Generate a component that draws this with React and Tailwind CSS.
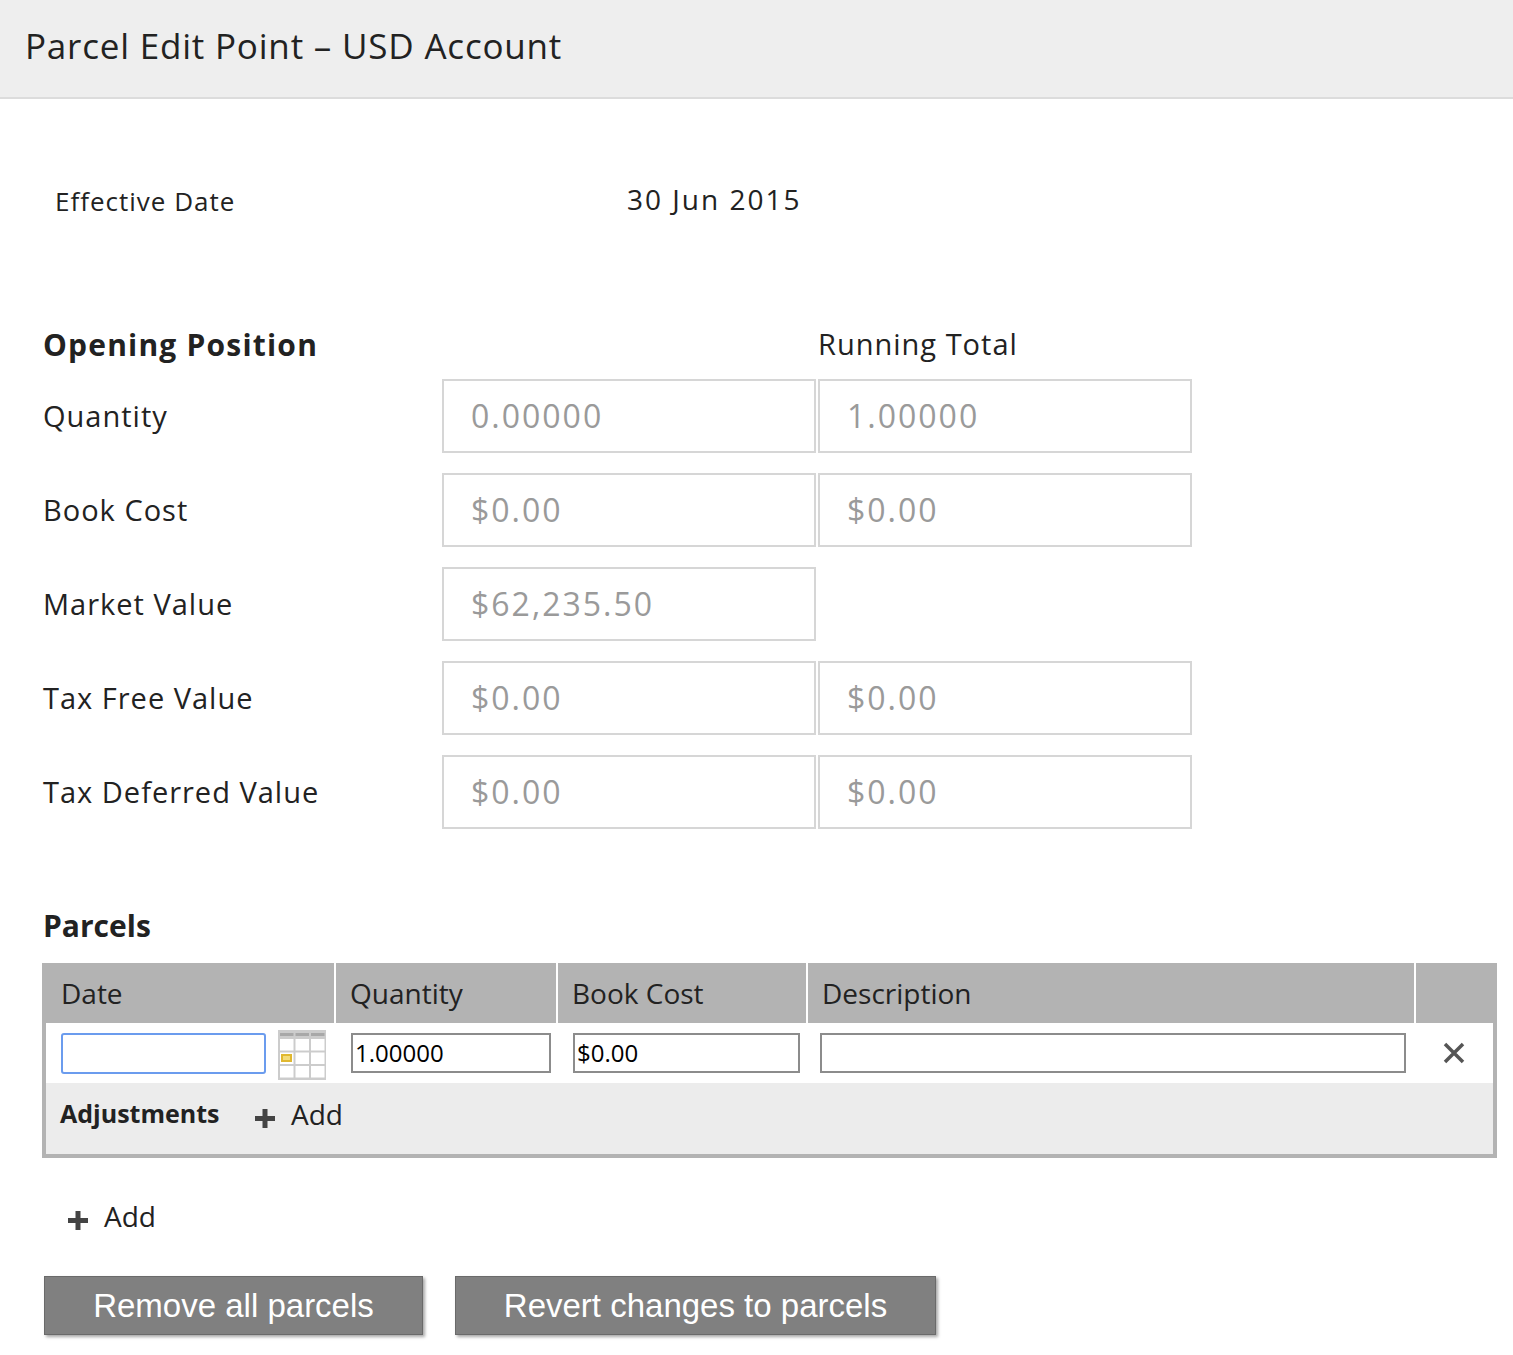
export default function App() {
  const F = { fontFamily: '"Open Sans", "Noto Sans", sans-serif' };
  const rows = [
    ["Quantity", "0.00000", "1.00000"],
    ["Book Cost", "$0.00", "$0.00"],
    ["Market Value", "$62,235.50", null],
    ["Tax Free Value", "$0.00", "$0.00"],
    ["Tax Deferred Value", "$0.00", "$0.00"],
  ];
  const Box = ({ v }) => (
    <div className="w-[374px] h-[74px] border-2 border-[#d6d6d6] flex items-center pl-[27px] text-[32px] text-[#9a9a9a] tracking-[2px]">{v}</div>
  );
  const Plus = () => (
    <svg width="22" height="22" viewBox="0 0 22 22" className="mt-2"><rect x="8.5" y="2" width="5" height="19" fill="#444"/><rect x="1" y="9" width="20" height="5" fill="#444"/></svg>
  );
  return (
    <div className="w-[1513px] h-[1355px] bg-white text-[#222]" style={F}>
      <div className="h-[99px] bg-[#eeeeee] border-b-2 border-[#dcdcdc] flex items-center pl-[25px] text-[35px] tracking-[0.8px] text-[#222] pb-1">Parcel Edit Point – USD Account</div>
      <div className="flex items-center mt-[82px] h-[40px]">
        <div className="pl-[55px] w-[627px] text-[26px] tracking-[1px]">Effective Date</div>
        <div className="text-[28px] tracking-[2px] -mt-1">30 Jun 2015</div>
      </div>
      <div className="flex items-end mt-[98px] h-[48px] pl-[43px]">
        <div className="w-[775px] text-[30px] font-bold tracking-[1.2px]">Opening Position</div>
        <div className="text-[29px] tracking-[1px] pb-[2px]">Running Total</div>
      </div>
      <div className="pl-[43px] flex flex-col gap-[20px] mt-[12px]">
        {rows.map(([l, a, b]) => (
          <div key={l} className="flex items-center h-[74px]">
            <div className="w-[399px] text-[29px] tracking-[1px]">{l}</div>
            <Box v={a} />
            {b && <div className="ml-[2px]"><Box v={b} /></div>}
          </div>
        ))}
      </div>
      <div className="pl-[43px] mt-[74px] text-[30px] font-bold h-[60px]">Parcels</div>
      <div className="ml-[42px] w-[1455px] border-x-4 border-b-4 border-[#b3b3b3]">
        <div className="flex h-[60px] bg-[#b3b3b3] -mx-[4px] text-[28px] items-center">
          <div className="w-[292px] pl-[19px] h-full flex items-center">Date</div>
          <div className="w-[222px] pl-[14px] h-full flex items-center border-l-2 border-white">Quantity</div>
          <div className="w-[250px] pl-[14px] h-full flex items-center border-l-2 border-white">Book Cost</div>
          <div className="w-[608px] pl-[14px] h-full flex items-center border-l-2 border-white">Description</div>
          <div className="flex-1 h-full border-l-2 border-white"></div>
        </div>
        <div className="flex h-[60px] bg-white items-center">
          <div className="w-[288px] flex items-center pl-[15px]">
            <div className="w-[205px] h-[41px] border-2 border-[#6b9cee] rounded-[3px]"></div>
            <svg width="48" height="50" viewBox="0 0 48 50" className="ml-[12px] mt-[4px]">
              <rect x="0" y="0" width="48" height="50" fill="#cccccc"/>
              {[0,1,2].map(r=>[0,1,2].map(c=>(
                <rect key={r+"-"+c} x={2+c*15.5} y={9+r*13.5} width="13.5" height="11.5" fill="#fff"/>
              )))}
              <rect x="2" y="3" width="13.5" height="3" fill="#a8a8a8"/><rect x="17.5" y="3" width="13.5" height="3" fill="#a8a8a8"/><rect x="33" y="3" width="13.5" height="3" fill="#a8a8a8"/>
              <rect x="3" y="24" width="11" height="8" fill="#e0b830"/><rect x="5" y="26" width="7" height="4" fill="#f3dc7a"/>
            </svg>
          </div>
          <div className="w-[222px] pl-[17px]"><div className="w-[200px] h-[40px] border-2 border-[#8c8c8c] flex items-center pl-[2px] text-[24px] text-black">1.00000</div></div>
          <div className="w-[250px] pl-[17px]"><div className="w-[227px] h-[40px] border-2 border-[#8c8c8c] flex items-center pl-[2px] text-[24px] text-black">$0.00</div></div>
          <div className="w-[608px] pl-[14px]"><div className="w-[586px] h-[40px] border-2 border-[#8c8c8c]"></div></div>
          <div className="flex-1 flex justify-center">
            <svg width="24" height="24" viewBox="0 0 24 24"><path d="M3 3L21 21M21 3L3 21" stroke="#555" strokeWidth="3.5"/></svg>
          </div>
        </div>
        <div className="h-[71px] bg-[#ececec] flex items-center pl-[14px] pb-[10px]">
          <div className="text-[25px] font-bold w-[194px]">Adjustments</div>
          <Plus />
          <div className="ml-[15px] text-[28px]">Add</div>
        </div>
      </div>
      <div className="flex items-center pl-[67px] mt-[38px] h-[40px]">
        <Plus />
        <div className="ml-[15px] text-[28px]">Add</div>
      </div>
      <div className="flex gap-[32px] pl-[44px] mt-[40px]" style={{fontFamily:'"Liberation Sans", Arial, sans-serif'}}>
        <button className="w-[379px] h-[59px] bg-[#808080] text-white text-[33px] border border-[#6a6a6a] shadow-[2px_2px_3px_rgba(0,0,0,0.35)]">Remove all parcels</button>
        <button className="w-[481px] h-[59px] bg-[#808080] text-white text-[33px] border border-[#6a6a6a] shadow-[2px_2px_3px_rgba(0,0,0,0.35)]">Revert changes to parcels</button>
      </div>
    </div>
  );
}
